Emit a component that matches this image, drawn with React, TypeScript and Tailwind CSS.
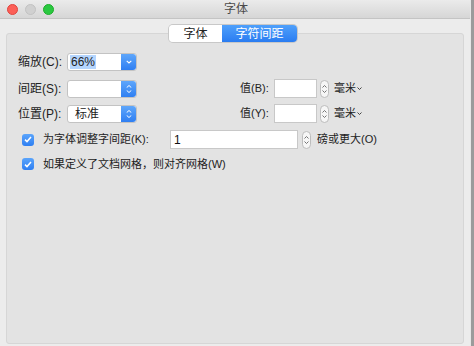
import React from "react";

const font = { fontFamily: '"Liberation Sans", "Noto Sans CJK SC", sans-serif' };

function Stepper() {
  return (
    <div className="w-[9px] h-[18px] rounded-full border border-[#bdbdbd] bg-[#f6f6f6] flex flex-col items-center justify-center gap-[2px]">
      <svg width="5" height="3" viewBox="0 0 5 3">
        <path d="M0.5 2.5 L2.5 0.5 L4.5 2.5" fill="none" stroke="#666" strokeWidth="0.9" />
      </svg>
      <svg width="5" height="3" viewBox="0 0 5 3">
        <path d="M0.5 0.5 L2.5 2.5 L4.5 0.5" fill="none" stroke="#666" strokeWidth="0.9" />
      </svg>
    </div>
  );
}

function BlueButton({ updown }: { updown?: boolean }) {
  return (
    <div className="w-[15px] h-full bg-gradient-to-b from-[#5ea6fb] to-[#2f7ff2] rounded-r-[3px] flex flex-col items-center justify-center gap-[2px]">
      {updown ? (
        <>
          <svg width="6" height="3" viewBox="0 0 6 3">
            <path d="M0.7 2.6 L3 0.5 L5.3 2.6" fill="none" stroke="#fff" strokeWidth="1" />
          </svg>
          <svg width="6" height="3" viewBox="0 0 6 3">
            <path d="M0.7 0.4 L3 2.5 L5.3 0.4" fill="none" stroke="#fff" strokeWidth="1" />
          </svg>
        </>
      ) : (
        <svg width="6" height="4" viewBox="0 0 6 4">
          <path d="M0.7 0.8 L3 3 L5.3 0.8" fill="none" stroke="#fff" strokeWidth="1.1" />
        </svg>
      )}
    </div>
  );
}

function Checkbox() {
  return (
    <div className="w-[12px] h-[12px] rounded-[3px] bg-gradient-to-b from-[#5aa4fb] to-[#2e7ff2] flex items-center justify-center">
      <svg width="8" height="7" viewBox="0 0 8 7">
        <path d="M1 3.6 L3 5.6 L7 1" fill="none" stroke="#fff" strokeWidth="1.5" />
      </svg>
    </div>
  );
}

function Unit() {
  return (
    <div className="ml-[5px] flex items-center text-[11px] text-[#222]">
      毫米
      <svg className="ml-[1px]" width="5" height="3" viewBox="0 0 5 3">
        <path d="M0.5 0.5 L2.5 2.5 L4.5 0.5" fill="none" stroke="#333" strokeWidth="0.9" />
      </svg>
    </div>
  );
}

export default function App() {
  return (
    <div className="w-[474px] h-[346px] bg-[#ececec] flex overflow-hidden" style={font}>
      <div className="w-[470px] h-full flex flex-col">
        {/* title bar */}
        <div className="h-[19px] bg-gradient-to-b from-[#ebebeb] to-[#d6d6d6] border-b border-[#c4c4c4] flex items-center px-[7px] relative">
          <div className="flex gap-[7px]">
            <div className="w-[11px] h-[11px] rounded-full bg-[#fc5f57] border border-[#e0443e]" />
            <div className="w-[11px] h-[11px] rounded-full bg-[#d0d0d0] border border-[#c2c2c2]" />
            <div className="w-[11px] h-[11px] rounded-full bg-[#2ac840] border border-[#1dad2b]" />
          </div>
          <div className="flex-1 text-center text-[12px] text-[#4a4a4a] pr-[45px] leading-none">字体</div>
        </div>

        {/* content */}
        <div className="flex-1 flex flex-col px-[6px] pt-[6px] pb-[2px]">
          <div className="self-center z-10 relative flex h-[17px] text-[12px] rounded-[4px] shadow-[0_0_0_1px_#c8c8c8] overflow-hidden ml-[-4px]">
            <div className="w-[53px] bg-white text-[#222] flex items-center justify-center">字体</div>
            <div className="w-[75px] bg-gradient-to-b from-[#4fa0fb] to-[#2a7cf1] text-white flex items-center justify-center">
              字符间距
            </div>
          </div>

          <div className="-mt-[9px] flex-1 bg-[#e3e3e3] border border-[#d6d6d6] rounded-[3px] pt-[19px] pl-[11px] text-[12px] text-[#222]">
            {/* row 1 */}
            <div className="flex items-center h-[18px]">
              <div className="w-[49px]">缩放(C):</div>
              <div className="w-[70px] h-[18px] flex border border-[#c3c3c3] rounded-[3px] bg-white">
                <div className="flex-1 flex items-center pl-[2px]">
                  <span className="bg-[#b4d5fe] px-[1px] leading-[14px]">66%</span>
                </div>
                <BlueButton />
              </div>
            </div>

            {/* row 2 */}
            <div className="flex items-center h-[19px] mt-[8px]">
              <div className="w-[49px]">间距(S):</div>
              <div className="w-[70px] h-[18px] flex border border-[#c3c3c3] rounded-[3px] bg-white">
                <div className="flex-1" />
                <BlueButton updown />
              </div>
              <div className="w-[103px]" />
              <div className="w-[34px] text-[11px]">值(B):</div>
              <div className="w-[43px] h-[19px] bg-white border border-[#c8c8c8]" />
              <div className="ml-[3px]">
                <Stepper />
              </div>
              <Unit />
            </div>

            {/* row 3 */}
            <div className="flex items-center h-[19px] mt-[6px]">
              <div className="w-[49px]">位置(P):</div>
              <div className="w-[70px] h-[18px] flex border border-[#c3c3c3] rounded-[3px] bg-white">
                <div className="flex-1 flex items-center pl-[7px]">标准</div>
                <BlueButton updown />
              </div>
              <div className="w-[103px]" />
              <div className="w-[34px] text-[11px]">值(Y):</div>
              <div className="w-[43px] h-[19px] bg-white border border-[#c8c8c8]" />
              <div className="ml-[3px]">
                <Stepper />
              </div>
              <Unit />
            </div>

            {/* row 4 */}
            <div className="flex items-center h-[19px] mt-[7px] text-[11px]">
              <div className="w-[4px]" />
              <Checkbox />
              <div className="ml-[9px] w-[127px]">为字体调整字间距(K):</div>
              <div className="w-[128px] h-[19px] bg-white border border-[#c8c8c8] flex items-center pl-[3px] text-[12px] text-[#111]">
                1
              </div>
              <div className="ml-[4px]">
                <Stepper />
              </div>
              <div className="ml-[6px]">磅或更大(O)</div>
            </div>

            {/* row 5 */}
            <div className="flex items-center h-[14px] mt-[8px] text-[11px]">
              <div className="w-[4px]" />
              <Checkbox />
              <div className="ml-[9px]">如果定义了文档网格，则对齐网格(W)</div>
            </div>
          </div>
        </div>
      </div>
      <div className="w-[1px] h-full bg-[#e6e6e6]" />
      <div className="w-[3px] h-full bg-[#9b9b9b]" />
    </div>
  );
}
